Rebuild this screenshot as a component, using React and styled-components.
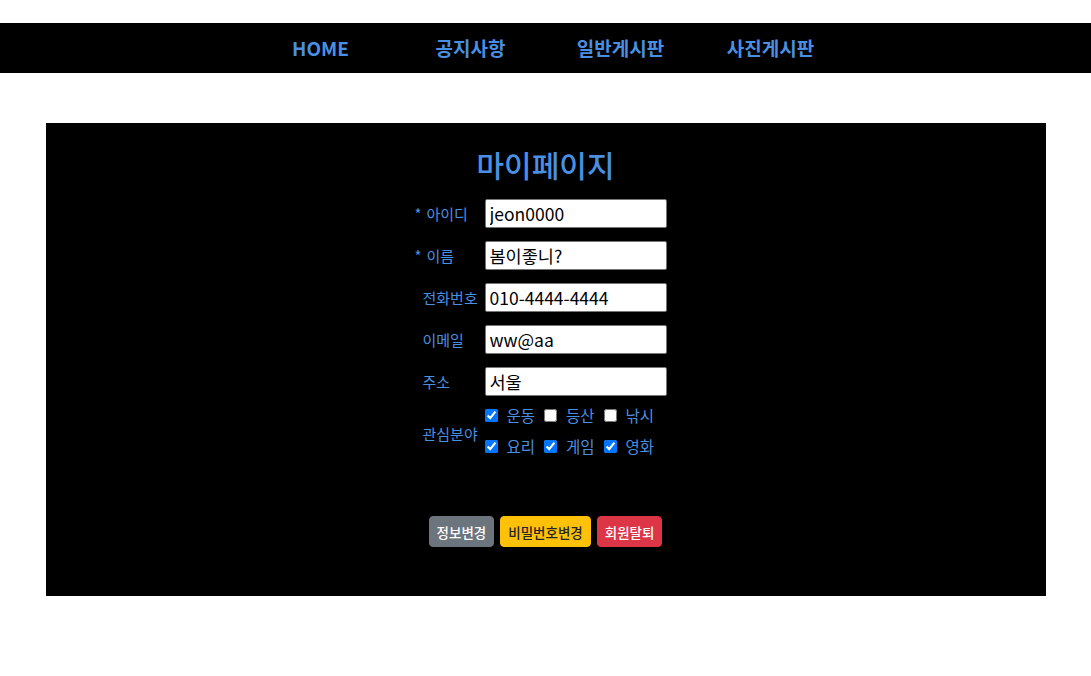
import React from 'react';
import styled, { createGlobalStyle } from 'styled-components';

const Global = createGlobalStyle`
    body {
        margin: 0;
        background: #fff;
        font-family: "Noto Sans CJK KR", "Noto Sans", sans-serif;
    }
`

const Nav = styled.nav`
    display: flex;
    justify-content: center;
    height: 50px;
    margin-top: 23px;
    background-color: #000;
`

const NavItem = styled.a`
    width: 150px;
    line-height: 50px;
    text-align: center;
    font-size: 19px;
    font-weight: 700;
    color: #4a90e2;
    text-decoration: none;
`

const Panel = styled.section`
    width: 1000px;
    margin: 50px auto 0;
    padding: 21px 0 49px;
    box-sizing: border-box;
    background-color: #000;
`

const Title = styled.h2`
    margin: 0 0 15px;
    text-align: center;
    font-size: 30px;
    font-weight: 500;
    line-height: 40px;
    color: #4a90e2;
`

const Form = styled.div`
    display: grid;
    grid-template-columns: 72px 182px;
    row-gap: 13px;
    width: 266px;
    padding-right: 12px;
    margin: 0 auto;
    box-sizing: border-box;
`

const Label = styled.label`
    display: flex;
    align-items: center;
    padding-left: ${p => (p.$req ? '2px' : '10px')};
    font-size: 15px;
    color: #4a90e2;
    white-space: nowrap;

    span {
        margin-right: 5px;
    }
`

const Input = styled.input`
    width: 182px;
    height: 29px;
    box-sizing: border-box;
    padding: 0 4px;
    border: 1px solid #767676;
    border-radius: 2px;
    font-family: inherit;
    font-size: 17.5px;
    color: #000;
    background: #fff;
`

const Checks = styled.div`
    display: flex;
    flex-direction: column;
    gap: 7px;
    margin-top: -6px;
`

const CheckRow = styled.div`
    display: flex;
    align-items: center;
    height: 24px;
    gap: 9px;
`

const Check = styled.label`
    display: flex;
    align-items: center;
    gap: 9px;
    font-size: 15.5px;
    color: #4a90e2;

    input {
        width: 13px;
        height: 13px;
        margin: 0;
    }
`

const Buttons = styled.div`
    display: flex;
    justify-content: center;
    gap: 6px;
    margin-top: 58px;
`

const colors = {
    secondary: ['#6c757d', '#fff'],
    warning: ['#ffc107', '#212529'],
    danger: ['#dc3545', '#fff'],
}

const Button = styled.button`
    height: 31px;
    padding: 0 7px;
    border: 1px solid ${p => colors[p.$kind][0]};
    border-radius: 4px;
    background-color: ${p => colors[p.$kind][0]};
    color: ${p => colors[p.$kind][1]};
    font-family: inherit;
    font-size: 13.5px;
    font-weight: 500;
    cursor: pointer;
`

const fields = [
    { label: '아이디', req: true, value: 'jeon0000' },
    { label: '이름', req: true, value: '봄이좋니?' },
    { label: '전화번호', value: '010-4444-4444' },
    { label: '이메일', value: 'ww@aa' },
    { label: '주소', value: '서울' },
]

const interests = [
    [['운동', true], ['등산', false], ['낚시', false]],
    [['요리', true], ['게임', true], ['영화', true]],
]

export default function App() {
    return (
        <>
            <Global />
            <Nav>
                <NavItem href="#">HOME</NavItem>
                <NavItem href="#">공지사항</NavItem>
                <NavItem href="#">일반게시판</NavItem>
                <NavItem href="#">사진게시판</NavItem>
            </Nav>
            <Panel>
                <Title>마이페이지</Title>
                <Form>
                    {fields.map(f => (
                        <React.Fragment key={f.label}>
                            <Label $req={f.req}>
                                {f.req && <span>*</span>}
                                {f.label}
                            </Label>
                            <Input defaultValue={f.value} />
                        </React.Fragment>
                    ))}
                    <Label>관심분야</Label>
                    <Checks>
                        {interests.map((row, i) => (
                            <CheckRow key={i}>
                                {row.map(([name, on]) => (
                                    <Check key={name}>
                                        <input type="checkbox" defaultChecked={on} />
                                        {name}
                                    </Check>
                                ))}
                            </CheckRow>
                        ))}
                    </Checks>
                </Form>
                <Buttons>
                    <Button $kind="secondary">정보변경</Button>
                    <Button $kind="warning">비밀번호변경</Button>
                    <Button $kind="danger">회원탈퇴</Button>
                </Buttons>
            </Panel>
        </>
    )
}
